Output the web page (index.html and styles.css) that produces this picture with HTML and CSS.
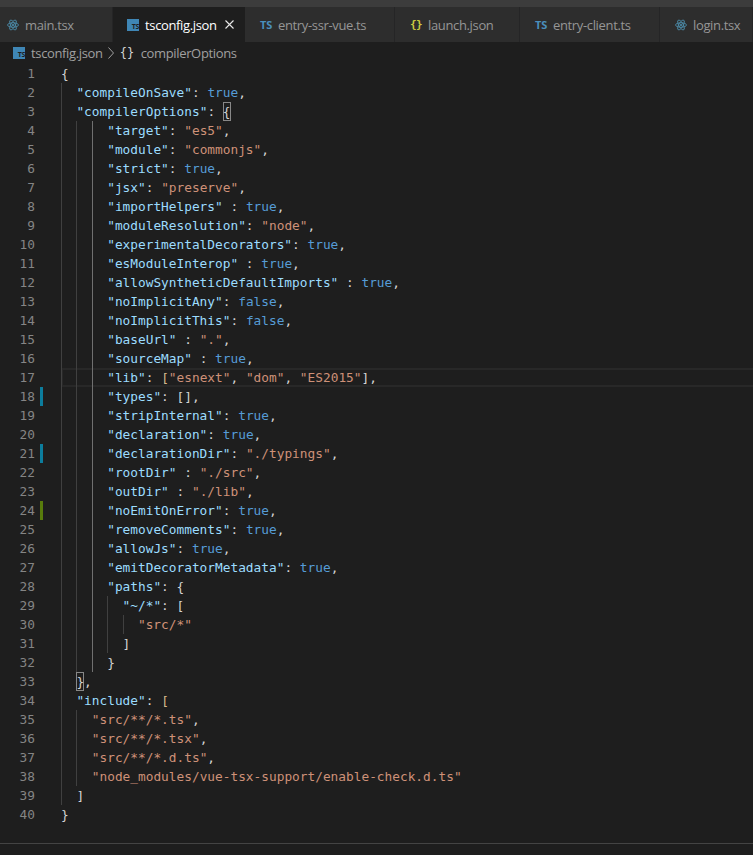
FILE: index.html
```html
<!DOCTYPE html>
<html lang="en">
<head>
  <meta charset="UTF-8" />
  <title>tsconfig.json</title>
  <link rel="stylesheet" href="styles.css">
</head>
<body>
  <svg class="defs" width="0" height="0">
    <symbol id="react" viewBox="0 0 24 24">
      <g fill="none" stroke="currentColor" stroke-width="1.7">
        <ellipse cx="12" cy="12" rx="11" ry="4.4"/>
        <ellipse cx="12" cy="12" rx="11" ry="4.4" transform="rotate(60 12 12)"/>
        <ellipse cx="12" cy="12" rx="11" ry="4.4" transform="rotate(120 12 12)"/>
      </g>
      <circle cx="12" cy="12" r="2.2" fill="currentColor"/>
    </symbol>
  </svg>

  <div class="topstrip"></div>

  <div class="tabs">
    <div class="tab tab_first"><svg class="ico_react"><use href="#react"/></svg><span>main.tsx</span></div>
    <div class="tab tab_active"><span class="ico_tsbox">TS</span><span>tsconfig.json</span><svg class="close" viewBox="0 0 9 9"><path d="M0.5 0.5 L8.5 8.5 M8.5 0.5 L0.5 8.5" fill="none" stroke="currentColor" stroke-width="1.1"/></svg></div>
    <div class="tab"><span class="ico_ts">TS</span><span>entry-ssr-vue.ts</span></div>
    <div class="tab"><span class="ico_json">{}</span><span>launch.json</span></div>
    <div class="tab"><span class="ico_ts">TS</span><span>entry-client.ts</span></div>
    <div class="tab"><svg class="ico_react"><use href="#react"/></svg><span>login.tsx</span></div>
  </div>

  <div class="crumbs">
    <span class="ico_tsbox">TS</span>
    <span>tsconfig.json</span>
    <svg class="chev" viewBox="0 0 6 12"><path d="M0.5 0.5 L5.5 6 L0.5 11.5" fill="none" stroke="currentColor" stroke-width="1"/></svg>
    <span class="crumb_obj">{}</span>
    <span>compilerOptions</span>
  </div>

  <div class="editor">
    <div class="line"><span class="ln">1</span><span class="gm"></span><span class="code"><b class="p">{</b></span></div>
    <div class="line"><span class="ln">2</span><span class="gm"></span><span class="code"><i class="g"></i><span class="k">"compileOnSave"</span><b class="p">: </b><span class="b">true</span><b class="p">,</b></span></div>
    <div class="line"><span class="ln">3</span><span class="gm"></span><span class="code"><i class="g"></i><span class="k">"compilerOptions"</span><b class="p">: </b><b class="p match">{</b></span></div>
    <div class="line"><span class="ln">4</span><span class="gm"></span><span class="code"><i class="g"></i><i class="g"></i><i class="g on"></i><span class="k">"target"</span><b class="p">: </b><span class="s">"es5"</span><b class="p">,</b></span></div>
    <div class="line"><span class="ln">5</span><span class="gm"></span><span class="code"><i class="g"></i><i class="g"></i><i class="g on"></i><span class="k">"module"</span><b class="p">: </b><span class="s">"commonjs"</span><b class="p">,</b></span></div>
    <div class="line"><span class="ln">6</span><span class="gm"></span><span class="code"><i class="g"></i><i class="g"></i><i class="g on"></i><span class="k">"strict"</span><b class="p">: </b><span class="b">true</span><b class="p">,</b></span></div>
    <div class="line"><span class="ln">7</span><span class="gm"></span><span class="code"><i class="g"></i><i class="g"></i><i class="g on"></i><span class="k">"jsx"</span><b class="p">: </b><span class="s">"preserve"</span><b class="p">,</b></span></div>
    <div class="line"><span class="ln">8</span><span class="gm"></span><span class="code"><i class="g"></i><i class="g"></i><i class="g on"></i><span class="k">"importHelpers"</span><b class="p"> : </b><span class="b">true</span><b class="p">,</b></span></div>
    <div class="line"><span class="ln">9</span><span class="gm"></span><span class="code"><i class="g"></i><i class="g"></i><i class="g on"></i><span class="k">"moduleResolution"</span><b class="p">: </b><span class="s">"node"</span><b class="p">,</b></span></div>
    <div class="line"><span class="ln">10</span><span class="gm"></span><span class="code"><i class="g"></i><i class="g"></i><i class="g on"></i><span class="k">"experimentalDecorators"</span><b class="p">: </b><span class="b">true</span><b class="p">,</b></span></div>
    <div class="line"><span class="ln">11</span><span class="gm"></span><span class="code"><i class="g"></i><i class="g"></i><i class="g on"></i><span class="k">"esModuleInterop"</span><b class="p"> : </b><span class="b">true</span><b class="p">,</b></span></div>
    <div class="line"><span class="ln">12</span><span class="gm"></span><span class="code"><i class="g"></i><i class="g"></i><i class="g on"></i><span class="k">"allowSyntheticDefaultImports"</span><b class="p"> : </b><span class="b">true</span><b class="p">,</b></span></div>
    <div class="line"><span class="ln">13</span><span class="gm"></span><span class="code"><i class="g"></i><i class="g"></i><i class="g on"></i><span class="k">"noImplicitAny"</span><b class="p">: </b><span class="b">false</span><b class="p">,</b></span></div>
    <div class="line"><span class="ln">14</span><span class="gm"></span><span class="code"><i class="g"></i><i class="g"></i><i class="g on"></i><span class="k">"noImplicitThis"</span><b class="p">: </b><span class="b">false</span><b class="p">,</b></span></div>
    <div class="line"><span class="ln">15</span><span class="gm"></span><span class="code"><i class="g"></i><i class="g"></i><i class="g on"></i><span class="k">"baseUrl"</span><b class="p"> : </b><span class="s">"."</span><b class="p">,</b></span></div>
    <div class="line"><span class="ln">16</span><span class="gm"></span><span class="code"><i class="g"></i><i class="g"></i><i class="g on"></i><span class="k">"sourceMap"</span><b class="p"> : </b><span class="b">true</span><b class="p">,</b></span></div>
    <div class="line line_cur"><span class="ln">17</span><span class="gm"></span><span class="code"><i class="g"></i><i class="g"></i><i class="g on"></i><span class="k">"lib"</span><b class="p">: </b><b class="br">[</b><span class="s">"esnext"</span><b class="p">, </b><span class="s">"dom"</span><b class="p">, </b><span class="s">"ES2015"</span><b class="p">],</b></span></div>
    <div class="line"><span class="ln">18</span><span class="gm gm_blue"></span><span class="code"><i class="g"></i><i class="g"></i><i class="g on"></i><span class="k">"types"</span><b class="p">: [],</b></span></div>
    <div class="line"><span class="ln">19</span><span class="gm"></span><span class="code"><i class="g"></i><i class="g"></i><i class="g on"></i><span class="k">"stripInternal"</span><b class="p">: </b><span class="b">true</span><b class="p">,</b></span></div>
    <div class="line"><span class="ln">20</span><span class="gm"></span><span class="code"><i class="g"></i><i class="g"></i><i class="g on"></i><span class="k">"declaration"</span><b class="p">: </b><span class="b">true</span><b class="p">,</b></span></div>
    <div class="line"><span class="ln">21</span><span class="gm gm_blue"></span><span class="code"><i class="g"></i><i class="g"></i><i class="g on"></i><span class="k">"declarationDir"</span><b class="p">: </b><span class="s">"./typings"</span><b class="p">,</b></span></div>
    <div class="line"><span class="ln">22</span><span class="gm"></span><span class="code"><i class="g"></i><i class="g"></i><i class="g on"></i><span class="k">"rootDir"</span><b class="p"> : </b><span class="s">"./src"</span><b class="p">,</b></span></div>
    <div class="line"><span class="ln">23</span><span class="gm"></span><span class="code"><i class="g"></i><i class="g"></i><i class="g on"></i><span class="k">"outDir"</span><b class="p"> : </b><span class="s">"./lib"</span><b class="p">,</b></span></div>
    <div class="line"><span class="ln">24</span><span class="gm gm_green"></span><span class="code"><i class="g"></i><i class="g"></i><i class="g on"></i><span class="k">"noEmitOnError"</span><b class="p">: </b><span class="b">true</span><b class="p">,</b></span></div>
    <div class="line"><span class="ln">25</span><span class="gm"></span><span class="code"><i class="g"></i><i class="g"></i><i class="g on"></i><span class="k">"removeComments"</span><b class="p">: </b><span class="b">true</span><b class="p">,</b></span></div>
    <div class="line"><span class="ln">26</span><span class="gm"></span><span class="code"><i class="g"></i><i class="g"></i><i class="g on"></i><span class="k">"allowJs"</span><b class="p">: </b><span class="b">true</span><b class="p">,</b></span></div>
    <div class="line"><span class="ln">27</span><span class="gm"></span><span class="code"><i class="g"></i><i class="g"></i><i class="g on"></i><span class="k">"emitDecoratorMetadata"</span><b class="p">: </b><span class="b">true</span><b class="p">,</b></span></div>
    <div class="line"><span class="ln">28</span><span class="gm"></span><span class="code"><i class="g"></i><i class="g"></i><i class="g on"></i><span class="k">"paths"</span><b class="p">: {</b></span></div>
    <div class="line"><span class="ln">29</span><span class="gm"></span><span class="code"><i class="g"></i><i class="g"></i><i class="g on"></i><i class="g"></i><span class="k">"~/*"</span><b class="p">: [</b></span></div>
    <div class="line"><span class="ln">30</span><span class="gm"></span><span class="code"><i class="g"></i><i class="g"></i><i class="g on"></i><i class="g"></i><i class="g"></i><span class="s">"src/*"</span></span></div>
    <div class="line"><span class="ln">31</span><span class="gm"></span><span class="code"><i class="g"></i><i class="g"></i><i class="g on"></i><i class="g"></i><b class="p">]</b></span></div>
    <div class="line"><span class="ln">32</span><span class="gm"></span><span class="code"><i class="g"></i><i class="g"></i><i class="g on"></i><b class="p">}</b></span></div>
    <div class="line"><span class="ln">33</span><span class="gm"></span><span class="code"><i class="g"></i><b class="p match">}</b><b class="p">,</b></span></div>
    <div class="line"><span class="ln">34</span><span class="gm"></span><span class="code"><i class="g"></i><span class="k">"include"</span><b class="p">: </b><b class="br">[</b></span></div>
    <div class="line"><span class="ln">35</span><span class="gm"></span><span class="code"><i class="g"></i><i class="g"></i><span class="s">"src/**/*.ts"</span><b class="p">,</b></span></div>
    <div class="line"><span class="ln">36</span><span class="gm"></span><span class="code"><i class="g"></i><i class="g"></i><span class="s">"src/**/*.tsx"</span><b class="p">,</b></span></div>
    <div class="line"><span class="ln">37</span><span class="gm"></span><span class="code"><i class="g"></i><i class="g"></i><span class="s">"src/**/*.d.ts"</span><b class="p">,</b></span></div>
    <div class="line"><span class="ln">38</span><span class="gm"></span><span class="code"><i class="g"></i><i class="g"></i><span class="s">"node_modules/vue-tsx-support/enable-check.d.ts"</span></span></div>
    <div class="line"><span class="ln">39</span><span class="gm"></span><span class="code"><i class="g"></i><b class="p">]</b></span></div>
    <div class="line"><span class="ln">40</span><span class="gm"></span><span class="code"><b class="p">}</b></span></div>
  </div>

  <div class="panel"></div>
</body>
</html>
```

FILE: styles.css
```css
html, body {
  margin: 0;
  height: 100%;
}

body {
  display: flex;
  flex-direction: column;
  background-color: #1e1e1e;
  font-family: "Open Sans", "Noto Sans", sans-serif;
  overflow: hidden;
}

.defs {
  position: absolute;
}

.topstrip {
  height: 7px;
  background-color: #3c3c3c;
}

/* tabs */
.tabs {
  display: grid;
  grid-template-columns: 113px 132px 150px 125px 140px 93px;
  height: 35px;
  background-color: #252526;
}

.tab {
  display: flex;
  align-items: center;
  gap: 6px;
  padding-left: 15px;
  background-color: #2d2d2d;
  border-right: 1px solid #252526;
  box-sizing: border-box;
  font-size: 13px;
  letter-spacing: -0.35px;
  color: #969696;
  white-space: nowrap;
}

.tab_first {
  padding-left: 7px;
}

.tab_active {
  padding-left: 14px;
  background-color: #1e1e1e;
  color: #fff;
  border-right: none;
}

.close {
  width: 9px;
  height: 9px;
  margin-left: 2px;
  color: #e8e8e8;
}

.ico_react {
  width: 12px;
  height: 12px;
  color: #4d8fae;
}

.ico_ts {
  width: 12px;
  font-size: 11px;
  font-weight: 700;
  letter-spacing: 0;
  color: #4a8fbd;
}

.ico_tsbox {
  display: flex;
  align-items: flex-end;
  justify-content: flex-end;
  width: 12px;
  height: 12px;
  background-color: #3f86b5;
  font-size: 7px;
  line-height: 8px;
  letter-spacing: -0.3px;
  font-weight: 700;
  color: #1e1e1e;
}

.ico_json {
  width: 12px;
  font-family: "DejaVu Sans Mono", monospace;
  font-size: 11px;
  font-weight: 700;
  letter-spacing: -0.6px;
  color: #cbcb41;
}

/* breadcrumb */
.crumbs {
  display: flex;
  align-items: center;
  gap: 6px;
  height: 22px;
  padding-left: 13px;
  font-size: 13px;
  letter-spacing: -0.35px;
  color: #a0a0a0;
}

.chev {
  width: 6px;
  height: 12px;
  margin-left: -1px;
}

.crumb_obj {
  width: 14px;
  margin-right: 1px;
  font-family: "DejaVu Sans Mono", monospace;
  font-size: 12px;
  letter-spacing: 0;
  color: #d4d4d4;
}

/* editor */
.editor {
  flex: 1;
  font-family: "DejaVu Sans Mono", monospace;
  font-size: 12.8px;
  line-height: 19px;
}

.line {
  display: flex;
  height: 19px;
  white-space: pre;
}

.ln {
  width: 35px;
  text-align: right;
  color: #858585;
}

.gm {
  width: 3px;
  margin: 0 18px 0 5px;
}

.gm_blue {
  background-color: #0c7d9d;
}

.gm_green {
  background-color: #587c0c;
}

.code {
  flex: 1;
  display: flex;
  color: #d4d4d4;
}

.line_cur .code {
  margin-right: -4px;
  box-shadow: inset 0 0 0 2px #282828;
}

.g {
  width: 15.4px;
  box-sizing: border-box;
  border-left: 1px solid #404040;
}

.g.on {
  border-left-color: #707070;
}

.p, .br {
  font-weight: normal;
}

.br {
  color: #d7ba8d;
}

.k {
  color: #9cdcfe;
}

.s {
  color: #ce9178;
}

.b {
  color: #569cd6;
}

.match {
  box-shadow: inset 0 0 0 1px #888;
}

.panel {
  height: 11px;
  border-top: 1px solid #444;
}
```
